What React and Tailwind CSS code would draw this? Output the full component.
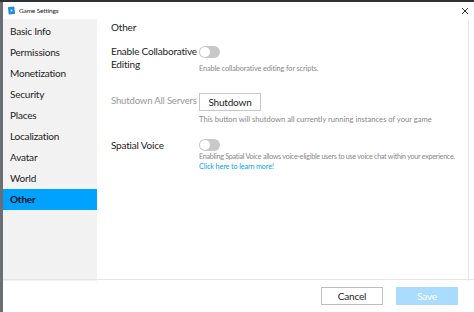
const items = ['Basic Info', 'Permissions', 'Monetization', 'Security', 'Places', 'Localization', 'Avatar', 'World', 'Other']

const Toggle = () => (
  <div className="w-[21px] h-[12px] rounded-full bg-[#c8c8c8] flex items-center px-[1px]">
    <div className="w-[10px] h-[10px] rounded-full bg-white" />
  </div>
)

const App = () => {
  return (
    <div className="w-[474px] h-[312px] bg-white flex flex-col overflow-hidden text-[#333]" style={{ fontFamily: 'Lato, "Open Sans", sans-serif' }}>
      <div className="h-[2px] bg-[#2e3136] shrink-0" />
      <div className="flex flex-1 min-h-0">
        <div className="w-[3px] bg-[#6b6e73] shrink-0" />
        <div className="flex-1 flex flex-col min-w-0">
          <div className="h-[17px] flex items-center justify-between pl-[4px] pr-[4px] shrink-0">
            <div className="flex items-center gap-[3px]">
              <svg width="9" height="9" viewBox="0 0 10 10">
                <path d="M1 1.5 L8 0.5 L9 8.5 L2 9.5 Z" fill="#1e88e5" />
                <rect x="4" y="4" width="2" height="2" fill="#fff" />
              </svg>
              <span className="text-[6.5px] tracking-[-0.15px] text-[#222]">Game Settings</span>
            </div>
            <svg width="8" height="8" viewBox="0 0 8 8" className="mr-[1px]">
              <path d="M1 1 L7 7 M7 1 L1 7" stroke="#333" strokeWidth="1" />
            </svg>
          </div>
          <div className="flex flex-1 min-h-0">
            <div className="w-[94px] bg-[#f2f2f2] h-[262px] pt-[2px] shrink-0">
              {items.map((it) => (
                <div
                  key={it}
                  className={`h-[21px] flex items-center pl-[7px] text-[10px] tracking-[-0.2px] ${it === 'Other' ? 'bg-[#00a2ff] text-[#111] font-bold' : 'text-[#222]'}`}
                >
                  {it}
                </div>
              ))}
            </div>
            <div className="flex-1 flex flex-col min-w-0">
              <div className="flex flex-1 min-h-0">
                <div className="flex-1 min-w-0 h-[262px] pl-[14px] border-r border-[#e8e8e8] text-[10px] tracking-[-0.2px]">
                  <div className="text-[#222] h-[16px] leading-[16px]">Other</div>
                  <div className="flex mt-[10px]">
                    <div className="w-[88px] shrink-0 leading-[13px] text-[#222]">Enable Collaborative Editing</div>
                    <div className="flex flex-col">
                      <div className="mt-[1px]"><Toggle /></div>
                      <div className="text-[7.3px] tracking-[-0.1px] leading-[10px] text-[#888] mt-[6px] whitespace-nowrap">Enable collaborative editing for scripts.</div>
                    </div>
                  </div>
                  <div className="flex mt-[19px]">
                    <div className="w-[88px] shrink-0 leading-[13px] text-[9.6px] text-[#999] pt-[1px] whitespace-nowrap">Shutdown All Servers</div>
                    <div className="flex flex-col">
                      <div className="w-[62px] h-[18px] border border-[#c8c8c8] flex items-center justify-center text-[#222]">Shutdown</div>
                      <div className="text-[7.6px] tracking-normal leading-[10px] text-[#888] mt-[3px] whitespace-nowrap">This button will shutdown all currently running instances of your game</div>
                    </div>
                  </div>
                  <div className="flex mt-[15px]">
                    <div className="w-[88px] shrink-0 text-[#222] leading-[13px]">Spatial Voice</div>
                    <div className="flex flex-col">
                      <div><Toggle /></div>
                      <div className="text-[7.2px] tracking-[-0.28px] text-[#888] mt-[1px] leading-[10px] whitespace-nowrap">Enabling Spatial Voice allows voice-eligible users to use voice chat within your experience.</div>
                      <div className="text-[7.2px] tracking-[-0.1px] text-[#00a2ff] leading-[10px]">Click here to learn more!</div>
                    </div>
                  </div>
                </div>
                <div className="w-[5px] shrink-0" />
              </div>
            </div>
          </div>
          <div className="h-[33px] border-t border-[#e6e6e6] flex items-center justify-end gap-[13px] pr-[16px] shrink-0 text-[10px] tracking-[-0.2px]">
            <div className="w-[62px] h-[18px] border border-[#bdbdbd] flex items-center justify-center text-[#222]">Cancel</div>
            <div className="w-[62px] h-[18px] bg-[#a9dcff] flex items-center justify-center text-white">Save</div>
          </div>
        </div>
      </div>
    </div>
  )
}

export default App
